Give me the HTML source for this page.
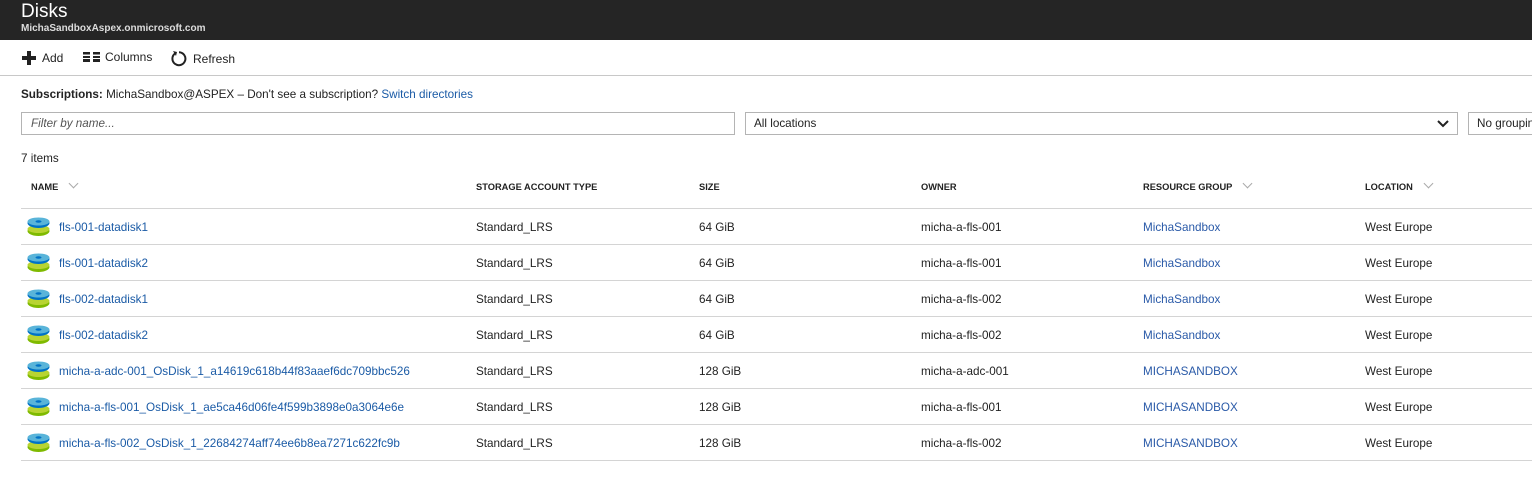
<!DOCTYPE html>
<html><head><style>
*{margin:0;padding:0;box-sizing:border-box}
body{width:1532px;height:486px;overflow:hidden;background:#fff;font-family:"Segoe UI","Liberation Sans",sans-serif;color:#222;font-size:11.7px;position:relative}
.top{position:absolute;left:0;top:0;width:1532px;height:40px;background:#252525;color:#fff}
.top h1{position:absolute;left:21px;top:1px;font-size:19px;font-weight:normal}
.top .sub{position:absolute;left:21px;top:23px;font-size:10px;color:#ddd;font-weight:bold}
.tb{position:absolute;top:50px;font-size:12px;color:#222;display:flex;align-items:center}
.line{position:absolute;left:0;width:1532px;height:1px;background:#c8c8c8}
.abs{position:absolute;white-space:nowrap}
.box{position:absolute;border:1px solid #b4b4b4;height:23px;top:112px}
a{color:#1b5ba6;text-decoration:none}
.h{font-size:9.3px;font-weight:bold;color:#222;top:182px}
.chev{display:inline-block;width:7px;height:7px;border-right:1px solid #aaa;border-bottom:1px solid #aaa;transform:rotate(45deg);margin-left:12px;position:relative;top:-3px}
.row{position:absolute;left:21px;width:1511px;height:36px;border-bottom:1px solid #d4d4d4}
.row span{position:absolute;top:12px;white-space:nowrap}
</style></head><body>
<div class="top"><h1>Disks</h1><div class="sub">MichaSandboxAspex.onmicrosoft.com</div></div>
<div class="tb" style="left:21px"><svg width="16" height="16"><path d="M6 1h4v5h5v4h-5v5H6v-5H1V6h5z" fill="#222"/></svg><span style="margin-left:5px">Add</span></div>
<div class="tb" style="left:83px"><svg width="17" height="14"><path d="M0 2h7v3H0zM0 6h7v2H0zM0 9h7v3H0zM10 2h7v3h-7zM10 6h7v2h-7zM10 9h7v3h-7z" fill="#222"/><path d="M0 5h17M0 8.5h17" stroke="#fff" stroke-width="1"/></svg><span style="margin-left:5px">Columns</span></div>
<div class="tb" style="left:170px"><svg width="17" height="17"><path d="M5 3.5A6.5 6.5 0 1 0 9 2.2" stroke="#222" stroke-width="2" fill="none"/><path d="M3 1l4 1-1 4z" fill="#222"/></svg><span style="margin-left:6px">Refresh</span></div>
<div class="line" style="top:75px"></div>
<div class="abs" style="left:21px;top:88px"><b>Subscriptions:</b> MichaSandbox@ASPEX – Don't see a subscription? <a>Switch directories</a></div>
<div class="box" style="left:21px;width:714px"><i style="position:absolute;left:9px;top:4px;color:#555">Filter by name...</i></div>
<div class="box" style="left:745px;width:713px"><span style="position:absolute;left:8px;top:4px">All locations</span><svg style="position:absolute;right:8px;top:7px" width="12" height="8"><path d="M1 1l5 5 5-5" stroke="#222" stroke-width="2" fill="none"/></svg></div>
<div class="box" style="left:1468px;width:80px"><span style="position:absolute;left:8px;top:4px">No grouping</span></div>
<div class="abs" style="left:21px;top:152px">7 items</div>
<div class="abs h" style="left:31px">NAME<i class="chev"></i></div>
<div class="abs h" style="left:476px">STORAGE ACCOUNT TYPE</div>
<div class="abs h" style="left:699px">SIZE</div>
<div class="abs h" style="left:921px">OWNER</div>
<div class="abs h" style="left:1143px">RESOURCE GROUP<i class="chev"></i></div>
<div class="abs h" style="left:1365px">LOCATION<i class="chev"></i></div>
<div class="line" style="top:208px;left:21px;background:#d4d4d4"></div>
<div id="rows"></div>
<script>
var d=[["fls-001-datadisk1","64 GiB","micha-a-fls-001","MichaSandbox"],["fls-001-datadisk2","64 GiB","micha-a-fls-001","MichaSandbox"],["fls-002-datadisk1","64 GiB","micha-a-fls-002","MichaSandbox"],["fls-002-datadisk2","64 GiB","micha-a-fls-002","MichaSandbox"],["micha-a-adc-001_OsDisk_1_a14619c618b44f83aaef6dc709bbc526","128 GiB","micha-a-adc-001","MICHASANDBOX"],["micha-a-fls-001_OsDisk_1_ae5ca46d06fe4f599b3898e0a3064e6e","128 GiB","micha-a-fls-001","MICHASANDBOX"],["micha-a-fls-002_OsDisk_1_22684274aff74ee6b8ea7271c622fc9b","128 GiB","micha-a-fls-002","MICHASANDBOX"]];
var ic='<svg style="position:absolute;left:6px;top:8px" width="23" height="20"><ellipse cx="11.5" cy="14" rx="11" ry="5" fill="#7fba00"/><ellipse cx="11.5" cy="12" rx="11" ry="4" fill="#b8d432"/><ellipse cx="11.5" cy="6" rx="11" ry="5" fill="#0072c6"/><ellipse cx="11.5" cy="4.5" rx="11" ry="4" fill="#59b4d9"/><ellipse cx="11.5" cy="4.5" rx="3" ry="1.2" fill="#0072c6"/></svg>';
var h='';d.forEach(function(r,i){h+='<div class="row" style="top:'+(209+i*36)+'px">'+ic+'<span style="left:38px"><a>'+r[0]+'</a></span><span style="left:455px">Standard_LRS</span><span style="left:678px">'+r[1]+'</span><span style="left:900px">'+r[2]+'</span><span style="left:1122px"><a style="color:#2a5aa8">'+r[3]+'</a></span><span style="left:1344px">West Europe</span></div>'});
document.getElementById('rows').innerHTML=h;
</script>
</body></html>
